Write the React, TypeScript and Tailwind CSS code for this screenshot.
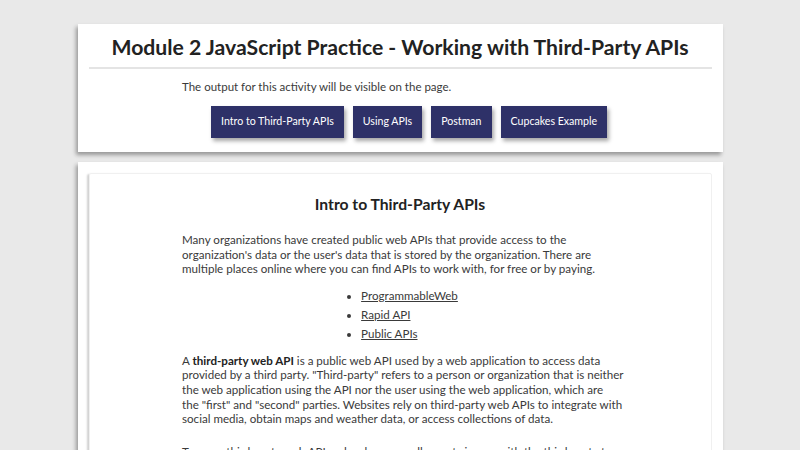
import React from "react";

const font = { fontFamily: "Lato, 'Open Sans', sans-serif" };

const buttons = ["Intro to Third-Party APIs", "Using APIs", "Postman", "Cupcakes Example"];

export default function App() {
  return (
    <div className="h-screen overflow-hidden bg-[#e9e9e9] pt-[24px] text-[#3a3a3a]" style={font}>
      <div className="mx-auto w-[645px] bg-white px-[11px] pt-[10px] pb-[14px] shadow-[-2px_3px_4px_rgba(0,0,0,0.35)]">
        <h1 className="text-center text-[21.2px] font-bold leading-[26px] text-[#222]">
          Module 2 JavaScript Practice - Working with Third-Party APIs
        </h1>
        <hr className="mt-[7px] border-t-2 border-[#e4e4e4]" />
        <div className="mx-auto w-[436px]">
          <p className="mt-[10px] text-[11.5px] leading-[15px]">
            The output for this activity will be visible on the page.
          </p>
          <div className="mt-[12px] flex gap-[9px] pl-[29px]">
            {buttons.map((b) => (
              <button
                key={b}
                className="h-[32px] whitespace-nowrap bg-[#2e3168] px-[10px] text-[10.6px] text-white shadow-[2px_3px_4px_rgba(0,0,0,0.35)]"
              >
                {b}
              </button>
            ))}
          </div>
        </div>
      </div>

      <div className="mx-auto mt-[10px] w-[645px] bg-white px-[11px] pt-[11px] pb-[20px] shadow-[-2px_3px_4px_rgba(0,0,0,0.35)]">
        <div className="rounded-[2px] border border-[#f0f0f0] pt-[19px] pb-[20px] shadow-[-2px_1px_2px_rgba(0,0,0,0.18)]">
          <h2 className="text-center text-[15.7px] font-bold leading-[22px] text-[#222]">
            Intro to Third-Party APIs
          </h2>
          <div className="mx-auto w-[436px] whitespace-nowrap text-[11.6px] leading-[14.6px]">
            <p className="mt-[18px]">
              Many organizations have created public web APIs that provide access to the
              <br />
              organization's data or the user's data that is stored by the organization. There are
              <br />
              multiple places online where you can find APIs to work with, for free or by paying.
            </p>
            <ul className="mx-auto mt-[9px] w-fit list-disc pl-[19px] leading-[19px]">
              <li>
                <a href="#" className="underline">ProgrammableWeb</a>
              </li>
              <li>
                <a href="#" className="underline">Rapid API</a>
              </li>
              <li>
                <a href="#" className="underline">Public APIs</a>
              </li>
            </ul>
            <p className="mt-[11px]">
              A <strong className="font-bold text-[#222]">third-party web API</strong> is a public web API used by a web application to access data
              <br />
              provided by a third party. "Third-party" refers to a person or organization that is neither
              <br />
              the web application using the API nor the user using the web application, which are
              <br />
              the "first" and "second" parties. Websites rely on third-party web APIs to integrate with
              <br />
              social media, obtain maps and weather data, or access collections of data.
            </p>
            <p className="mt-[18px]">
              To use a third-party web API, a developer usually must sign up with the third-party to
              <br />
              get an API key that identifies the application making the requests.
            </p>
          </div>
        </div>
      </div>
    </div>
  );
}
